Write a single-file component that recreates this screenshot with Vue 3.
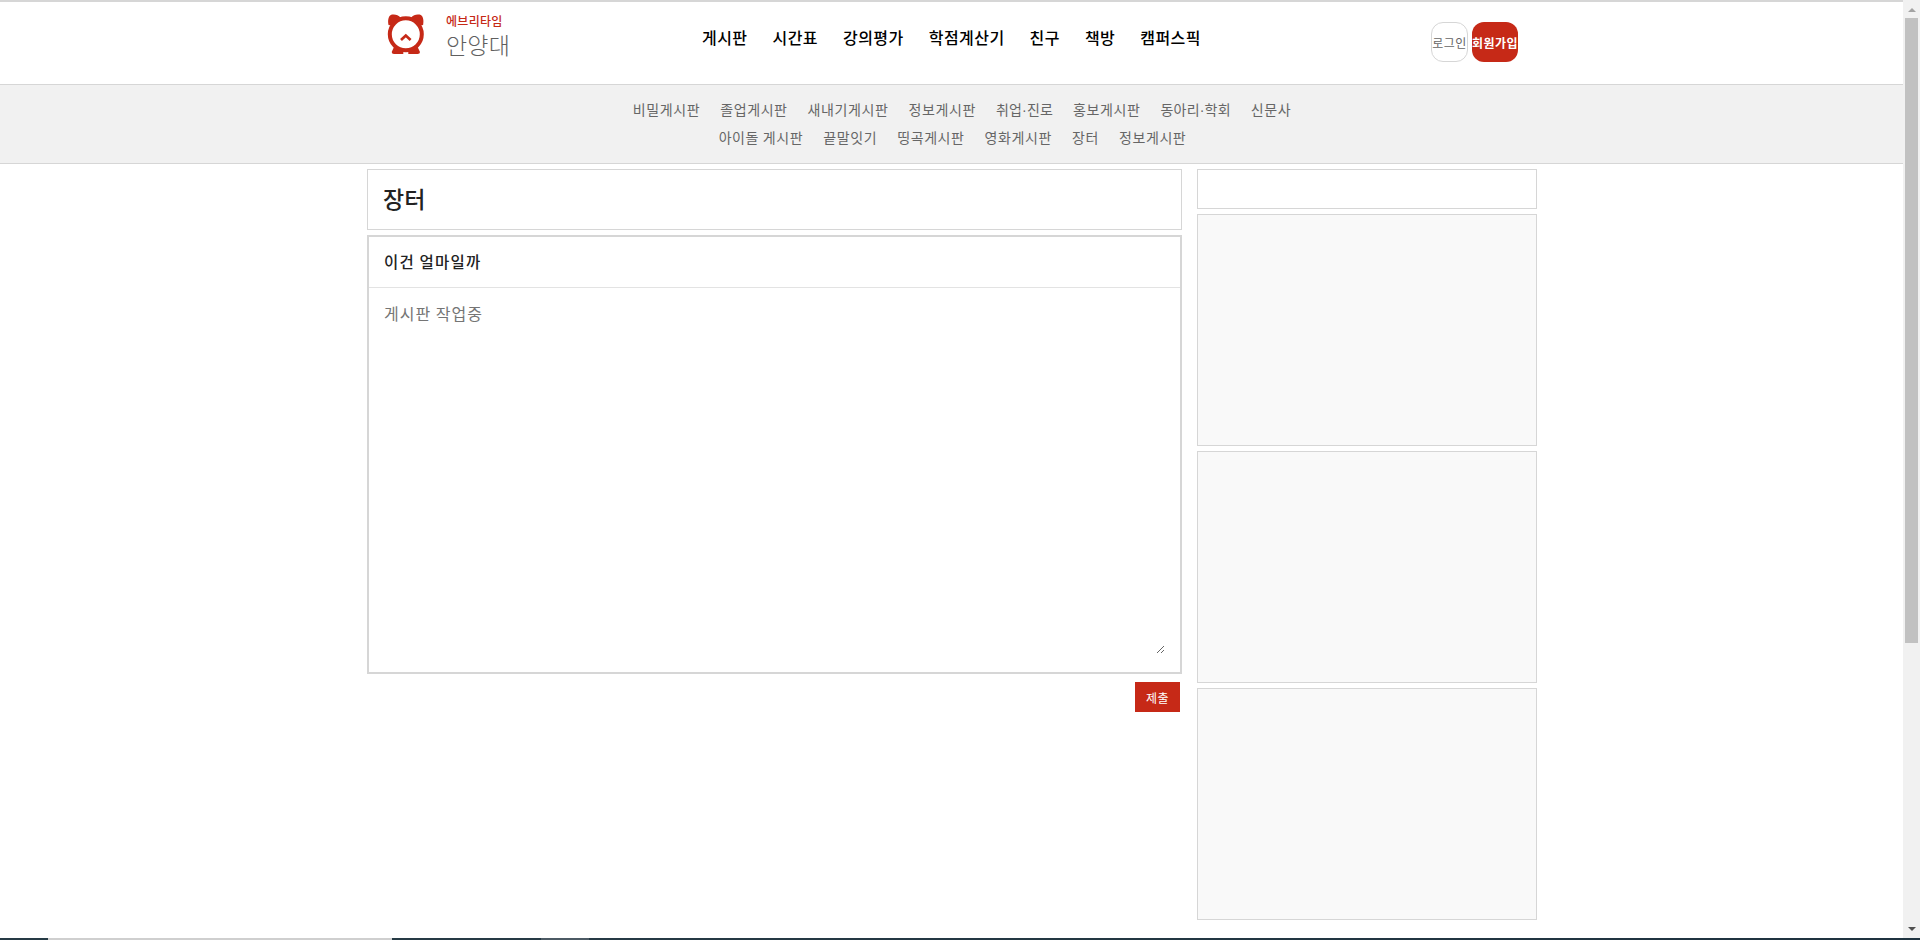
<script setup>
const mainNav = ['게시판', '시간표', '강의평가', '학점계산기', '친구', '책방', '캠퍼스픽']
const subRow1 = ['비밀게시판', '졸업게시판', '새내기게시판', '정보게시판', '취업·진로', '홍보게시판', '동아리·학회', '신문사']
const subRow2 = ['아이돌 게시판', '끝말잇기', '띵곡게시판', '영화게시판', '장터', '정보게시판']
</script>

<template>
  <div class="screen">
    <div class="viewport">
      <div class="page">
        <header class="top">
          <a class="logo">
            <svg class="clock" viewBox="0 0 38 40" width="38" height="40">
              <path d="M1.500 11 C0.500 6 1.500 1.500 5 0.600 C8 0 11.500 1 13.500 3.500 L6 12 Z M36.100 11 C37.100 6 36.100 1.500 32.600 0.600 C29.600 0 26.100 1 24.100 3.500 L31.600 12 Z" fill="#c62917" />
              <path d="M7 33 L4.700 38 Q4.700 40 7 40 L16.300 40 L16.300 37.700 L21.300 37.700 L21.300 40 L30.600 40 Q33 40 33 38 L30.600 33 Z" fill="#c62917" />
              <circle cx="18.800" cy="20.300" r="16" fill="#fff" stroke="#c62917" stroke-width="4" />
              <path d="M14 26 L18.800 21.500 L23.600 26" fill="none" stroke="#c62917" stroke-width="2.700" />
            </svg>
            <div class="logo-text">
              <div class="brand">에브리타임</div>
              <div class="school">안양대</div>
            </div>
          </a>
          <nav class="main-nav">
            <a v-for="item in mainNav" :key="item">{{ item }}</a>
          </nav>
          <div class="auth">
            <button class="login">로그인</button>
            <button class="signup">회원가입</button>
          </div>
        </header>
        <div class="sub-nav">
          <div class="sub-row first">
            <a v-for="item in subRow1" :key="item" :class="{ tight: item.includes('·') }">{{ item }}</a>
          </div>
          <div class="sub-row second">
            <a v-for="item in subRow2" :key="item">{{ item }}</a>
          </div>
        </div>
        <div class="content">
          <main class="left">
            <div class="title-card"><h1>장터</h1></div>
            <div class="write-card">
              <div class="write-title">이건 얼마일까</div>
              <textarea class="write-body" placeholder="게시판 작업중"></textarea>
            </div>
            <div class="actions"><button class="submit">제출</button></div>
          </main>
          <aside class="right">
            <div class="search-box"></div>
            <div class="panel"></div>
            <div class="panel"></div>
            <div class="panel"></div>
          </aside>
        </div>
      </div>
      <div class="scrollbar">
        <span class="arrow up"></span>
        <span class="thumb"></span>
        <span class="arrow down"></span>
      </div>
    </div>
    <div class="taskbar">
      <span class="seg-light"></span>
      <span class="seg-dark"></span>
      <span class="seg-active"></span>
      <span class="seg-rest"></span>
    </div>
  </div>
</template>

<style>
html, body { margin: 0; padding: 0; overflow: hidden; background: #fff; }
</style>

<style scoped>
.screen {
  width: 1920px;
  height: 940px;
  display: flex;
  flex-direction: column;
  overflow: hidden;
  font-family: "Noto Sans CJK KR", "Noto Sans", sans-serif;
}
.viewport { flex: 1; min-height: 0; display: flex; }
.page { flex: 1; min-width: 0; border-top: 2px solid #d6d6d6; }

.top {
  height: 82px;
  box-sizing: content-box;
  border-bottom: 1px solid #d6d6d6;
  display: flex;
  align-items: flex-start;
  padding-left: 387px;
}
.logo { display: flex; gap: 21px; padding-top: 12px; width: 315px; flex: none; }
.clock { display: block; }
.logo-text { margin-top: 0; }
.brand { font-size: 12px; line-height: 14px; font-weight: 500; letter-spacing: 0.3px; color: #c62917; }
.school { font-size: 23px; line-height: 30px; margin-top: 1px; font-weight: 300; color: #5f5f5f; letter-spacing: 0.2px; }

.main-nav { display: flex; gap: 25px; padding-top: 23px; width: 729px; flex: none; }
.main-nav a { font-size: 16px; line-height: 24px; font-weight: 500; letter-spacing: 0.45px; color: #000; }

.auth { display: flex; gap: 4px; padding-top: 20px; }
.auth button {
  height: 40px;
  padding: 0;
  border-radius: 12px;
  font-family: inherit;
  font-size: 12px;
  letter-spacing: 0.5px;
  white-space: nowrap;
  overflow: hidden;
}
.login { width: 37px; background: #fff; border: 1px solid #d6d6d6; color: #666; }
.signup { width: 46px; background: #c62917; border: 0; color: #fff; font-weight: 700; }

.sub-nav {
  background: #f1f1f1;
  border-bottom: 1px solid #d6d6d6;
  padding-top: 10px;
  box-sizing: border-box;
  height: 79px;
}
.sub-row { display: flex; justify-content: center; gap: 20px; height: 28px; align-items: center; }
.sub-row.first { padding: 2px 0 0 21px; box-sizing: border-box; font-family: "Liberation Sans", "Noto Sans CJK KR", sans-serif; }
.sub-row.second { padding-left: 2px; }
.sub-row a { font-size: 14px; line-height: 28px; letter-spacing: 0.6px; color: #666; }
.sub-row a.tight { letter-spacing: 0.2px; }

.content { display: flex; gap: 15px; padding: 5px 0 0 367px; }
.left { width: 815px; }
.right { width: 340px; display: flex; flex-direction: column; gap: 5px; }

.title-card {
  height: 61px;
  box-sizing: border-box;
  border: 1px solid #d6d6d6;
  display: flex;
  align-items: center;
  padding: 0 0 4px 15px;
}
.title-card h1 { margin: 0; font-size: 23px; font-weight: 500; color: #222; }

.write-card {
  margin-top: 5px;
  height: 439px;
  box-sizing: border-box;
  border: 2px solid #d6d6d6;
  display: flex;
  flex-direction: column;
}
.write-title {
  height: 51px;
  flex: none;
  box-sizing: border-box;
  border-bottom: 1px solid #e3e3e3;
  padding: 0 0 2px 15px;
  display: flex;
  align-items: center;
  font-size: 15.500px;
  font-weight: 500;
  letter-spacing: 1.200px;
  color: #222;
}
.write-body {
  flex: 1;
  min-height: 0;
  margin: 0 15px 18px;
  padding: 13px 0 0;
  border: 0;
  outline: 0;
  font-family: inherit;
  font-size: 16px;
  letter-spacing: 1px;
  line-height: 24px;
  background: #fff;
  color: #222;
}
.write-body::placeholder { color: #757575; opacity: 1; }

.actions { display: flex; justify-content: flex-end; padding: 8px 2px 0 0; }
.submit {
  width: 45px;
  height: 30px;
  padding: 0;
  background: #c62917;
  color: #fff;
  border: 0;
  font-family: inherit;
  font-size: 12px;
  letter-spacing: 0.5px;
}

.search-box { height: 40px; border: 1px solid #d6d6d6; box-sizing: border-box; }
.panel { height: 232px; box-sizing: border-box; border: 1px solid #d6d6d6; background: #f9f9f9; }

.scrollbar {
  width: 17px;
  flex: none;
  background: #f1f1f1;
  position: relative;
}
.thumb {
  position: absolute;
  left: 2px;
  top: 18px;
  width: 13px;
  height: 625px;
  background: #c1c1c1;
}
.arrow {
  position: absolute;
  left: 5px;
  width: 0;
  height: 0;
  border-left: 4px solid transparent;
  border-right: 4px solid transparent;
}
.arrow.up { top: 8px; border-bottom: 4px solid #a3a3a3; }
.arrow.down { bottom: 7px; border-top: 4px solid #505050; }

.taskbar { height: 2px; flex: none; display: flex; background: #263a45; }
.seg-light { margin-left: 48px; width: 344px; background: #cfcfcf; }
.seg-dark { width: 149px; background: #263a45; }
.seg-active { width: 48px; background: #4c5a64; }
.seg-rest { flex: 1; background: linear-gradient(90deg, #263a45, #1f3340); }
</style>
